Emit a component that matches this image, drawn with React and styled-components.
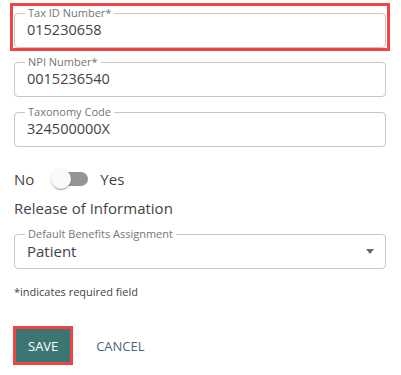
import React from "react";
import styled, { createGlobalStyle } from "styled-components";

const Global = createGlobalStyle`
  body {
    margin: 0;
    background: #fff;
    font-family: "Open Sans", "Liberation Sans", sans-serif;
    color: #444;
  }
`;

const Form = styled.form`
  display: flex;
  flex-direction: column;
  padding: 3px 15px 0 14px;
  width: 372px;
`;

const Highlight = styled.div`
  border: 3px solid #f04545;
  padding: 1px 1px 0 1px;
  margin: 0 -4px;
`;

const Fieldset = styled.fieldset`
  margin: ${({ $top }) => $top || 0}px 0 0 0;
  padding: 0 12px;
  border: 1px solid #c6c6c6;
  border-radius: 4px;
  min-width: 0;
  display: flex;
  align-items: center;

  legend {
    font-size: 11px;
    line-height: 12px;
    color: #757575;
    padding: 0 3px;
    margin-left: -2px;
  }
`;

const Value = styled.div`
  flex: 1;
  font-size: ${({ $size }) => $size || 14.5}px;
  line-height: 20px;
  padding: 1px 0 7px;
  color: #444;
`;

const Arrow = styled.span`
  width: 0;
  height: 0;
  border-left: 4px solid transparent;
  border-right: 4px solid transparent;
  border-top: 5px solid #6a6a6a;
  margin-right: -1px;
  margin-bottom: 6px;
`;

const SwitchRow = styled.div`
  display: flex;
  align-items: center;
  height: 38px;
  margin-top: 13px;
  font-size: 15px;
  color: #444;
`;

const SwitchRoot = styled.span`
  width: 58px;
  height: 38px;
  margin-left: 8px;
  position: relative;
  display: inline-block;
`;

const Track = styled.span`
  position: absolute;
  left: 12px;
  top: 12px;
  width: 34px;
  height: 14px;
  border-radius: 7px;
  background: #959595;
`;

const Thumb = styled.span`
  position: absolute;
  left: 9px;
  top: 9px;
  width: 20px;
  height: 20px;
  border-radius: 50%;
  background: #fafafa;
  box-shadow: 0 2px 1px -1px rgba(0, 0, 0, 0.2), 0 1px 1px 0 rgba(0, 0, 0, 0.14),
    0 1px 3px 0 rgba(0, 0, 0, 0.12);
`;

const Heading = styled.div`
  font-size: 15px;
  line-height: 20px;
  color: #444;
`;

const Note = styled.div`
  font-size: 11px;
  line-height: 14px;
  color: #444;
  margin-top: 16px;
`;

const Actions = styled.div`
  display: flex;
  align-items: center;
  margin-top: 27px;
  margin-left: -1px;
  gap: 20px;
`;

const SaveFrame = styled.div`
  border: 3px solid #f04545;
  display: flex;
`;

const Button = styled.button`
  border: none;
  outline: none;
  font-family: "Open Sans", "Liberation Sans", sans-serif;
  font-size: 13px;
  text-transform: uppercase;
  height: 33px;
  padding: 0 ${({ $primary }) => ($primary ? 12 : 0)}px;
  min-width: 54px;
  background: ${({ $primary }) => ($primary ? "#3b7673" : "transparent")};
  color: ${({ $primary }) => ($primary ? "#fff" : "#46677a")};
  cursor: pointer;
`;

function Field({ label, value, top }) {
  return (
    <Fieldset $top={top}>
      <legend>{label}</legend>
      <Value>{value}</Value>
    </Fieldset>
  );
}

export default function App() {
  return (
    <>
      <Global />
      <Form>
        <Highlight>
          <Field label="Tax ID Number*" value="015230658" />
        </Highlight>
        <Field label="NPI Number*" value="0015236540" top={5} />
        <Field label="Taxonomy Code" value="324500000X" top={9} />
        <SwitchRow>
          No
          <SwitchRoot>
            <Track />
            <Thumb />
          </SwitchRoot>
          Yes
        </SwitchRow>
        <Heading>Release of Information</Heading>
        <Fieldset $top={10}>
          <legend>Default Benefits Assignment</legend>
          <Value $size={15}>Patient</Value>
          <Arrow />
        </Fieldset>
        <Note>*indicates required field</Note>
        <Actions>
          <SaveFrame>
            <Button type="button" $primary>Save</Button>
          </SaveFrame>
          <Button type="button">Cancel</Button>
        </Actions>
      </Form>
    </>
  );
}
